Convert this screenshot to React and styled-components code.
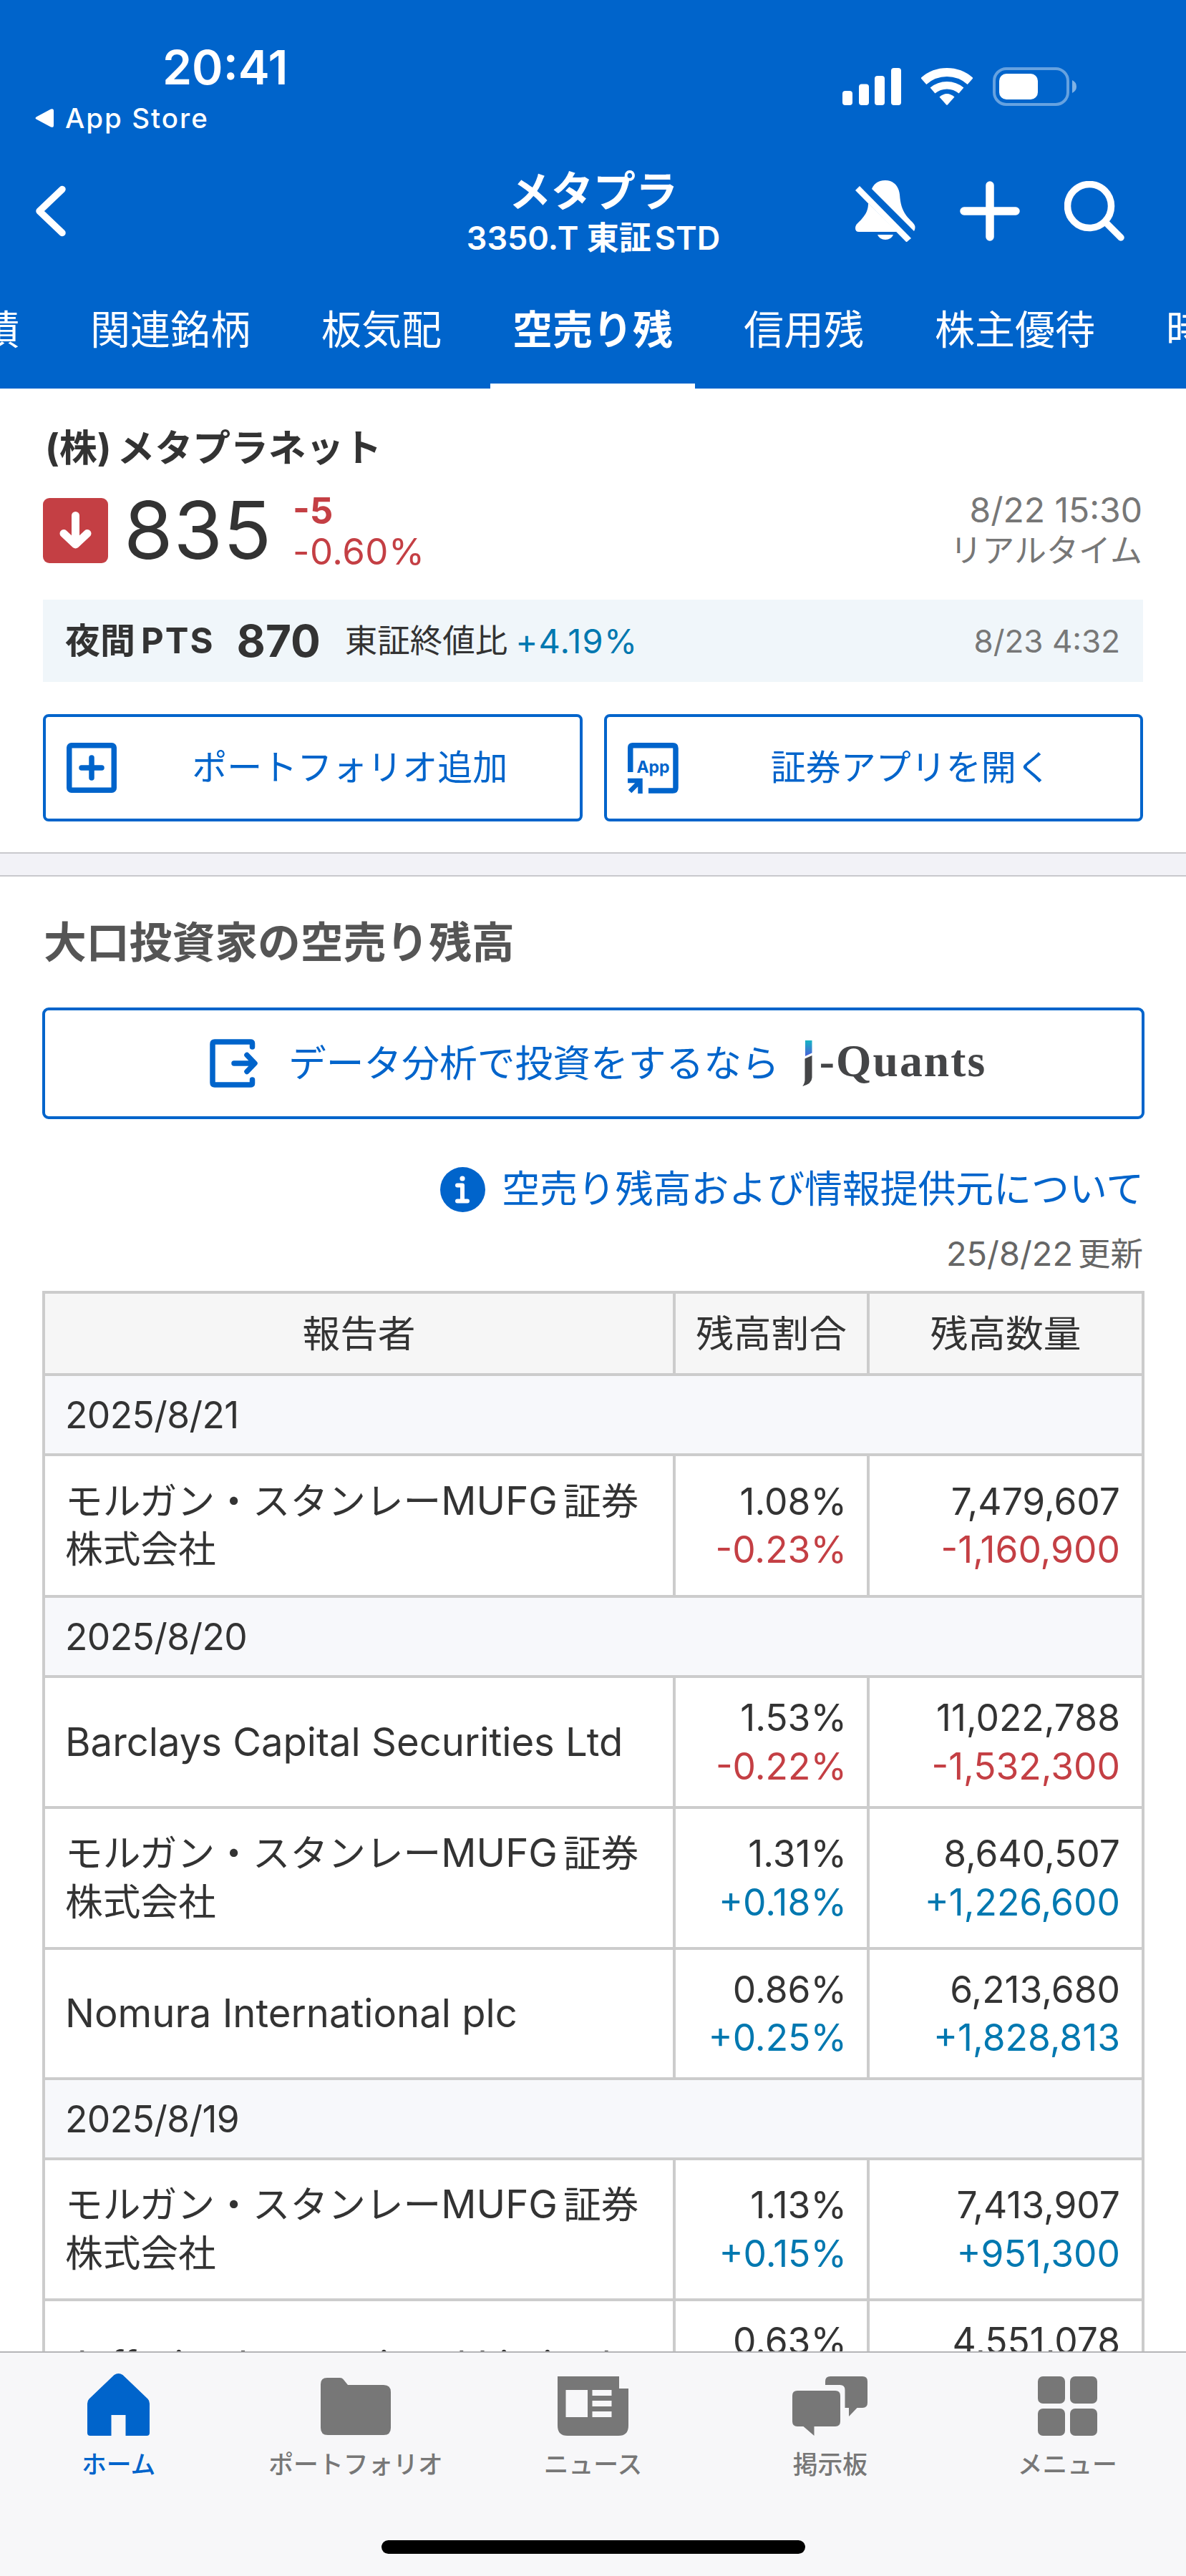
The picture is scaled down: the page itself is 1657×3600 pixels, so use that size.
import React from "react";
import styled, { createGlobalStyle } from "styled-components";

const C = {
  blue: "#0064cb",
  line: "#cccccc",
  text: "#333333",
  gray: "#777777",
  red: "#c43f44",
  up: "#0078b0",
};

const Global = createGlobalStyle`
  * { box-sizing: border-box; }
  html, body { margin: 0; padding: 0; background: #fff; }
  body {
    font-family: Inter, "Noto Sans CJK JP", sans-serif;
    color: ${C.text};
    font-kerning: normal;
  }
  svg { display: block; flex: none; }
`;

const Screen = styled.div`
  width: 1657px;
  height: 3600px;
  display: flex;
  flex-direction: column;
  overflow: hidden;
  background: #fff;
`;

/* One line of text; its size, weight, tone and tracking vary. */
const Text = styled.span`
  display: block;
  white-space: nowrap;
  font-size: ${(p) => p.$size}px;
  line-height: ${(p) => p.$lh || 60}px;
  font-weight: ${(p) => p.$weight || 400};
  letter-spacing: ${(p) => p.$track || 0}px;
  color: ${(p) => p.$color || "inherit"};
`;

/* Latin letters set inside Japanese text, with the space the two scripts keep. */
const Latin = styled.span`
  font-size: ${(p) => p.$scale || 1}em;
  line-height: 1;
  margin-left: ${(p) => p.$before || 0}px;
  margin-right: ${(p) => p.$after || 0}px;
  letter-spacing: ${(p) => p.$track || 0}px;
`;

const Header = styled.header`
  height: 543px;
  flex: none;
  background: ${C.blue};
  color: #fff;
  overflow: hidden;
`;

const StatusBar = styled.div`
  height: 210px;
  display: flex;
  justify-content: space-between;
  padding: 54px 153px 0 49px;
`;

const Clock = styled(Text)`
  padding-left: 178px;
`;

const BackToApp = styled.div`
  display: flex;
  align-items: center;
  gap: 15px;
  margin-top: 6px;
`;

const StatusIcons = styled.div`
  display: flex;
  align-items: flex-start;
  gap: 28px;
  padding-top: 40px;
`;

const NavBar = styled.div`
  height: 170px;
  display: grid;
  grid-template-columns: 1fr auto 1fr;
  align-items: center;
  padding: 0 86px 0 49px;
`;

const NavTitle = styled.div`
  text-align: center;
  padding: 10px 0 0 38px;
`;

const NavActions = styled.div`
  display: flex;
  justify-content: flex-end;
  align-items: center;
  gap: 62px;
`;

const Tabs = styled.nav`
  display: flex;
  gap: 37px;
  height: 163px;
  margin-left: -116px;
`;

const Tab = styled.div`
  flex: none;
  padding: 52px 31px 0;
  font-size: 56px;
  line-height: 58px;
  white-space: nowrap;
  font-weight: ${(p) => (p.$active ? 700 : 400)};
  border-bottom: 7px solid ${(p) => (p.$active ? "#fff" : "transparent")};
`;

const Content = styled.main`
  flex: 1;
  min-height: 0;
  overflow: hidden;
`;

const Quote = styled.section`
  height: 648px;
  padding: 53px 60px 0;
`;

const Company = styled.div`
  display: flex;
  gap: 8px;
  padding-left: 3px;
`;

const PriceRow = styled.div`
  display: flex;
  align-items: center;
  height: 114px;
  margin-top: 28px;
`;

const Direction = styled.div`
  width: 91px;
  height: 91px;
  border-radius: 9px;
  background: ${C.red};
`;

const Price = styled(Text)`
  width: 238px;
  padding-left: 22px;
`;

const Change = styled.div`
  flex: 1;
  padding: 2px 0 0 20px;
`;

const Stamp = styled.div`
  text-align: right;
  padding-right: 1px;
`;

const PtsBand = styled.div`
  display: flex;
  align-items: center;
  height: 115px;
  margin-top: 40px;
  padding: 0 32px 0 31px;
  background: #f0f6fa;
`;

const PtsPart = styled(Text)`
  margin-right: ${(p) => p.$gap}px;
`;

const PtsTime = styled(Text)`
  margin-left: auto;
`;

const Actions = styled.div`
  display: grid;
  grid-template-columns: 1fr 1fr;
  gap: 30px;
  margin-top: 45px;
`;

const ActionButton = styled.div`
  display: flex;
  align-items: center;
  height: 150px;
  padding: 0 0 0 29px;
  border: 4px solid ${C.blue};
  border-radius: 8px;
  color: ${C.blue};
`;

const ActionLabel = styled(Text)`
  flex: 1;
  padding-left: 5px;
  text-align: center;
`;

const Divider = styled.div`
  height: 34px;
  background: #f2f2f7;
  border: solid #c9c9cd;
  border-width: 2px 0;
`;

const Shorts = styled.section`
  padding: 57px 58px 0 59px;
`;

const Heading = styled.h2`
  margin: 0;
  padding-left: 2px;
  font-size: 59.8px;
  line-height: 70px;
  font-weight: 700;
  color: #555;
`;

const Banner = styled.div`
  display: flex;
  align-items: center;
  height: 156px;
  margin-top: 56px;
  padding-left: 230px;
  border: 4px solid ${C.blue};
  border-radius: 9px;
  color: ${C.blue};
`;

const BannerLabel = styled(Text)`
  margin: 0 32px 0 43px;
`;

const Logo = styled.div`
  display: flex;
  align-items: center;
  gap: 10px;
`;

const LogoText = styled.span`
  padding-bottom: 6px;
  font-family: "Liberation Serif", serif;
  font-weight: 700;
  font-size: 63.5px;
  line-height: 70px;
  letter-spacing: ${(p) => p.$track}px;
  color: #444547;
`;

const InfoLink = styled.div`
  display: flex;
  justify-content: flex-end;
  align-items: center;
  gap: 23px;
  height: 64px;
  margin-top: 66px;
  padding-right: 1px;
  color: ${C.blue};
`;

const Updated = styled(Text)`
  height: 60px;
  margin-top: 29px;
  text-align: right;
  padding-right: 2px;
`;

const Table = styled.div`
  margin-top: 21px;
  border: 4px solid ${C.line};
  border-bottom: 0;
`;

const Row = styled.div`
  display: grid;
  grid-template-columns: 877px 271px 1fr;
  height: ${(p) => p.$h}px;
  border-bottom: 4px solid ${C.line};
  background: ${(p) => p.$bg || "#fff"};
`;

const Cell = styled.div`
  display: flex;
  flex-direction: column;
  justify-content: center;
  padding: 0 ${(p) => p.$right || 30}px 0 28px;
  border-left: ${(p) => (p.$first ? 0 : 4)}px solid ${C.line};
  text-align: ${(p) => p.$align || "left"};
`;

const HeadCell = styled(Cell)`
  padding: 0;
`;

const DateRow = styled.div`
  display: flex;
  align-items: center;
  height: 112px;
  padding-left: 28px;
  border-bottom: 4px solid ${C.line};
  background: #f7f8fb;
`;

const BottomBar = styled.footer`
  flex: none;
  height: 314px;
  border-top: 2px solid #b5b5b8;
  background: #f7f7f9;
`;

const BottomTabs = styled.div`
  display: grid;
  grid-template-columns: repeat(5, 1fr);
  height: 262px;
`;

const BottomTab = styled.div`
  display: flex;
  flex-direction: column;
  align-items: center;
  color: ${(p) => (p.$active ? C.blue : C.gray)};
`;

const IconSlot = styled.div`
  display: flex;
  align-items: flex-end;
  height: 116px;
  margin-bottom: 17px;
`;

const HomeIndicator = styled.div`
  width: 592px;
  height: 19px;
  margin: 0 auto;
  border-radius: 10px;
  background: #000;
`;

const SignalIcon = () => (
  <svg width="82" height="53" viewBox="0 0 82 53" fill="#fff">
    <rect x="0" y="33" width="14" height="20" rx="4" />
    <rect x="23" y="23.5" width="14" height="29.5" rx="4" />
    <rect x="45" y="12" width="14" height="41" rx="4" />
    <rect x="68" y="1" width="14" height="52" rx="4" />
  </svg>
);

const WifiIcon = () => (
  <svg width="72" height="53" viewBox="0 0 72 53" fill="none" stroke="#fff">
    <path d="M3.3 19.5a49 49 0 0 1 65.4 0" strokeWidth="12" />
    <path d="M16 32.5a31 31 0 0 1 40 0" strokeWidth="10.5" />
    <path d="M25.5 41.5q10.500-9 21 0L37 52.300q-1 1-2 0z" fill="#fff" stroke="none" />
  </svg>
);

const BatteryIcon = () => (
  <svg width="117" height="54" viewBox="0 0 117 54">
    <rect x="2" y="2" width="103" height="50" rx="17" fill="none" stroke="#fff" strokeOpacity=".4" strokeWidth="4" />
    <rect x="9" y="9" width="54" height="36" rx="10" fill="#fff" />
    <path d="M111 18q6 3 6 9t-6 9z" fill="#fff" fillOpacity=".5" />
  </svg>
);

const TriangleIcon = () => (
  <svg width="27" height="26" viewBox="0 0 27 26" fill="#fff">
    <path d="M2 11.200 22 .6q4-1.600 4 2.400v20q0 4-4 2.400L2 14.800q-3-1.800 0-3.600z" />
  </svg>
);

const BackIcon = () => (
  <svg width="43" height="72" viewBox="0 0 43 72" fill="none" stroke="#fff" strokeWidth="9.500" strokeLinecap="round" strokeLinejoin="round">
    <path d="M38 5.500 6 36l32 30.500" />
  </svg>
);

const BellOffIcon = () => (
  <svg width="84" height="86" viewBox="0 0 84 86" fill="#fff">
    <path d="M0 14 6 8l72 73-6.500 5.500z" />
    <path d="M23 12Q28 0 42 0c12 0 19 9 20 20 1 13 3 20 9 29 6 8 12 11 12.500 16 0 3-.5 4-1.500 6z" />
    <path d="M18 32 58 72H5q-5 0-5-5c0-6 5-8 9-13 7-8 9-14 9-22z" />
    <path d="M31 76h22q-3 7-11 7t-11-7z" />
  </svg>
);

const PlusIcon = () => (
  <svg width="84" height="84" viewBox="0 0 84 84" fill="none" stroke="#fff" strokeWidth="11.500" strokeLinecap="round">
    <path d="M42 6v72M6 42h72" />
  </svg>
);

const SearchIcon = () => (
  <svg width="84" height="84" viewBox="0 0 84 84" fill="none" stroke="#fff" strokeLinecap="round">
    <circle cx="35" cy="35" r="30.500" strokeWidth="9.500" />
    <path d="m58 58 21 21" strokeWidth="9.500" />
  </svg>
);

const DownIcon = () => (
  <svg width="91" height="91" viewBox="0 0 91 91" fill="none" stroke="#fff" strokeWidth="11" strokeLinecap="round" strokeLinejoin="round">
    <path d="M45.500 24.500V62M29 49.500l16.500 15.500L62 49.500" />
  </svg>
);

const AddBoxIcon = () => (
  <svg width="70" height="70" viewBox="0 0 70 70" fill="none" stroke={C.blue} strokeWidth="7.500">
    <rect x="3.750" y="3.750" width="62.500" height="62.500" rx="3" />
    <path d="M35 21v28M21 35h28" strokeLinecap="round" />
  </svg>
);

const AppText = styled.text`
  font: 700 23px Inter, sans-serif;
  fill: ${C.blue};
  stroke: none;
`;

const AppBoxIcon = () => (
  <svg width="71" height="71" viewBox="0 0 71 71" fill="none" stroke={C.blue} strokeWidth="7.500">
    <path d="M3.750 41V7q0-3.250 3.250-3.250h56q4 0 4 4V63q0 4-4 4H29" />
    <path d="M0 53h17.500v18M16 55 3 68" strokeWidth="6.500" />
    <AppText x="12.500" y="41.500" textLength="46">App</AppText>
  </svg>
);

const ExportIcon = () => (
  <svg width="67" height="68" viewBox="0 0 67 68" fill="none" stroke={C.blue} strokeWidth="7.500" strokeLinecap="round" strokeLinejoin="round">
    <path d="M59.500 11V6q0-2-3-2H7Q4 4 4 7v54q0 3 3 3h49.500q3 0 3-2v-5" />
    <path d="M34 34h27M52 22.500 63 34 52 45.500" />
  </svg>
);

const JMark = () => (
  <svg width="14" height="64" viewBox="0 0 14 64">
    <defs>
      <linearGradient id="jtop" x1="0" y1="0" x2="0" y2="1">
        <stop offset="0" stopColor="#16b5c4" />
        <stop offset="1" stopColor="#4b5fd8" />
      </linearGradient>
    </defs>
    <path d="M4 0h9.500v17.500L4 22z" fill="url(#jtop)" />
    <path d="M3.500 25.500 13.500 21v31Q13 61 0 64q4-4 3.500-12z" fill="#444547" />
  </svg>
);

const InfoIcon = () => (
  <svg width="63" height="63" viewBox="0 0 63 63">
    <circle cx="31.500" cy="31.500" r="31.500" fill={C.blue} />
    <circle cx="31" cy="16" r="3.600" fill="#fff" />
    <path d="M24 25.500h7v22M24 47.500h14" fill="none" stroke="#fff" strokeWidth="6" strokeLinecap="round" strokeLinejoin="round" />
  </svg>
);

const HomeIcon = () => (
  <svg width="87" height="87" viewBox="0 0 87 87" fill="currentColor">
    <path d="M37.500 2q6-4 12 0L84.500 35.500Q87 38 87 42v41q0 4-4 4H53.500V58h-20v29H4q-4 0-4-4V42q0-4 2.500-6.500z" />
  </svg>
);

const FolderIcon = () => (
  <svg width="98" height="81" viewBox="0 0 98 81" fill="currentColor">
    <path d="M9 0h18q3 0 4.500 2l6.500 8h50q10 0 10 10v50q0 10-10 10H10Q0 80 0 70V9q0-9 9-9z" />
  </svg>
);

const NewsIcon = () => (
  <svg width="99" height="83" viewBox="0 0 99 83" fill="currentColor" fillRule="evenodd">
    <path d="M0 0h86v17h13v52q0 14-14 14H14Q0 83 0 69zM11.500 19v38H42V19zM48.500 19v8h27v-8zM48.500 34v8h27v-8zM48.500 49v8h27v-8z" />
  </svg>
);

const BoardIcon = () => (
  <svg width="105" height="83" viewBox="0 0 105 83" fill="currentColor">
    <path d="M7 20h53q7 0 7 7v36q0 7-7 7H30.500v13L15.500 70H7q-7 0-7-7V27q0-7 7-7z" />
    <path d="M46 12V7q0-7 7-7h45q7 0 7 7v30q0 7-7 7h-7.500L79 56V44h-5.500V19q0-7-7-7z" />
  </svg>
);

const MenuIcon = () => (
  <svg width="83" height="83" viewBox="0 0 83 83" fill="currentColor">
    <rect width="38" height="38" rx="7" />
    <rect x="45" width="38" height="38" rx="7" />
    <rect y="45" width="38" height="38" rx="7" />
    <rect x="45" y="45" width="38" height="38" rx="7" />
  </svg>
);

const tabs = ["業績", "関連銘柄", "板気配", "空売り残", "信用残", "株主優待", "時系列"];

const rows = [
  { date: "2025/8/21" },
  { h: 198, ratio: "1.08%", dr: "-0.23%", qty: "7,479,607", dq: "-1,160,900" },
  { date: "2025/8/20" },
  { name: "Barclays Capital Securities Ltd", h: 183, ratio: "1.53%", dr: "-0.22%", qty: "11,022,788", dq: "-1,532,300" },
  { h: 197, ratio: "1.31%", dr: "+0.18%", qty: "8,640,507", dq: "+1,226,600" },
  { name: "Nomura International plc", h: 182, ratio: "0.86%", dr: "+0.25%", qty: "6,213,680", dq: "+1,828,813" },
  { date: "2025/8/19" },
  { h: 197, ratio: "1.13%", dr: "+0.15%", qty: "7,413,907", dq: "+951,300" },
  { name: "Jefferies International Limited", h: 183, ratio: "0.63%", dr: "\u00a0", qty: "4,551,078", dq: "\u00a0" },
];

const bottom = [
  ["ホーム", HomeIcon],
  ["ポートフォリオ", FolderIcon],
  ["ニュース", NewsIcon],
  ["掲示板", BoardIcon],
  ["メニュー", MenuIcon],
];

const Figures = ({ value, delta, right }) => (
  <Cell $align="right" $right={right}>
    <Text $size={51.5} $lh={67.5}>{value}</Text>
    <Text $size={51.5} $lh={67.5} $color={delta[0] === "-" ? C.red : C.up}>{delta}</Text>
  </Cell>
);

const MorganName = () => (
  <>
    <Text $size={52.7} $lh={67.5}>
      モルガン・スタンレー<Latin $scale={1.035} $after={8}>MUFG</Latin>証券
    </Text>
    <Text $size={52.7} $lh={67.5}>株式会社</Text>
  </>
);

export default function App() {
  return (
    <Screen lang="ja">
      <Global />
      <Header>
        <StatusBar>
          <div>
            <Clock $size={66} $lh={80} $weight={600}>20:41</Clock>
            <BackToApp>
              <TriangleIcon />
              <Text $size={38.5} $lh={50} $weight={500} $track={2}>App Store</Text>
            </BackToApp>
          </div>
          <StatusIcons>
            <SignalIcon />
            <WifiIcon />
            <BatteryIcon />
          </StatusIcons>
        </StatusBar>
        <NavBar>
          <BackIcon />
          <NavTitle>
            <Text $size={59} $lh={66} $weight={700}>メタプラ</Text>
            <Text $size={45} $lh={64} $weight={600}>
              3350.T 東証<Latin $before={5}>STD</Latin>
            </Text>
          </NavTitle>
          <NavActions>
            <BellOffIcon />
            <PlusIcon />
            <SearchIcon />
          </NavActions>
        </NavBar>
        <Tabs>
          {tabs.map((t) => (
            <Tab key={t} $active={t === "空売り残"}>{t}</Tab>
          ))}
        </Tabs>
      </Header>

      <Content>
        <Quote>
          <Company>
            <Text $size={52.8} $weight={700}>(株)</Text>
            <Text $size={52.8} $weight={700}>メタプラネット</Text>
          </Company>
          <PriceRow>
            <Direction><DownIcon /></Direction>
            <Price $size={111} $lh={114} $track={0.8}>835</Price>
            <Change>
              <Text $size={51} $lh={57} $weight={700} $color={C.red}>-5</Text>
              <Text $size={51} $lh={57} $track={0.5} $color={C.red}>-0.60%</Text>
            </Change>
            <Stamp>
              <Text $size={48} $lh={57} $color={C.gray}>8/22 15:30</Text>
              <Text $size={45} $lh={57} $color={C.gray}>リアルタイム</Text>
            </Stamp>
          </PriceRow>
          <PtsBand>
            <PtsPart $size={49} $weight={700} $gap={31}>
              夜間<Latin $before={8} $track={2}>PTS</Latin>
            </PtsPart>
            <PtsPart $size={62} $weight={700} $gap={34}>870</PtsPart>
            <PtsPart $size={45.5} $gap={11}>東証終値比</PtsPart>
            <PtsPart $size={47} $track={1.2} $color={C.up} $gap={0}>+4.19%</PtsPart>
            <PtsTime $size={44} $color={C.gray}>8/23 4:32</PtsTime>
          </PtsBand>
          <Actions>
            <ActionButton>
              <AddBoxIcon />
              <ActionLabel $size={49} $lh={70}>ポートフォリオ追加</ActionLabel>
            </ActionButton>
            <ActionButton>
              <AppBoxIcon />
              <ActionLabel $size={49} $lh={70}>証券アプリを開く</ActionLabel>
            </ActionButton>
          </Actions>
        </Quote>
        <Divider />
        <Shorts>
          <Heading>大口投資家の空売り残高</Heading>
          <Banner>
            <ExportIcon />
            <BannerLabel $size={52.75} $lh={70}>データ分析で投資をするなら</BannerLabel>
            <Logo>
              <JMark />
              <LogoText $track={2.1}>-Quants</LogoText>
            </Logo>
          </Banner>
          <InfoLink>
            <InfoIcon />
            <Text $size={52.85} $lh={64}>空売り残高および情報提供元について</Text>
          </InfoLink>
          <Updated $size={45.5} $color="#666">
            <Latin $scale={1.03} $after={7}>25/8/22</Latin>更新
          </Updated>
          <Table>
            <Row $h={115} $bg="#f6f6f6">
              <HeadCell $first $align="center"><Text $size={52.7}>報告者</Text></HeadCell>
              <HeadCell $align="center"><Text $size={52.7}>残高割合</Text></HeadCell>
              <HeadCell $align="center"><Text $size={52.7}>残高数量</Text></HeadCell>
            </Row>
            {rows.map((r, i) =>
              r.date ? (
                <DateRow key={i}><Text $size={51.5} $track={-0.6}>{r.date}</Text></DateRow>
              ) : (
                <Row key={i} $h={r.h}>
                  <Cell $first>
                    {r.name ? <Text $size={54.4} $lh={67.5}>{r.name}</Text> : <MorganName />}
                  </Cell>
                  <Figures value={r.ratio} delta={r.dr} right={28} />
                  <Figures value={r.qty} delta={r.dq} right={30} />
                </Row>
              )
            )}
          </Table>
        </Shorts>
      </Content>

      <BottomBar>
        <BottomTabs>
          {bottom.map(([label, Icon]) => (
            <BottomTab key={label} $active={label === "ホーム"}>
              <IconSlot><Icon /></IconSlot>
              <Text $size={34.8} $lh={46} $weight={500}>{label}</Text>
            </BottomTab>
          ))}
        </BottomTabs>
        <HomeIndicator />
      </BottomBar>
    </Screen>
  );
}
